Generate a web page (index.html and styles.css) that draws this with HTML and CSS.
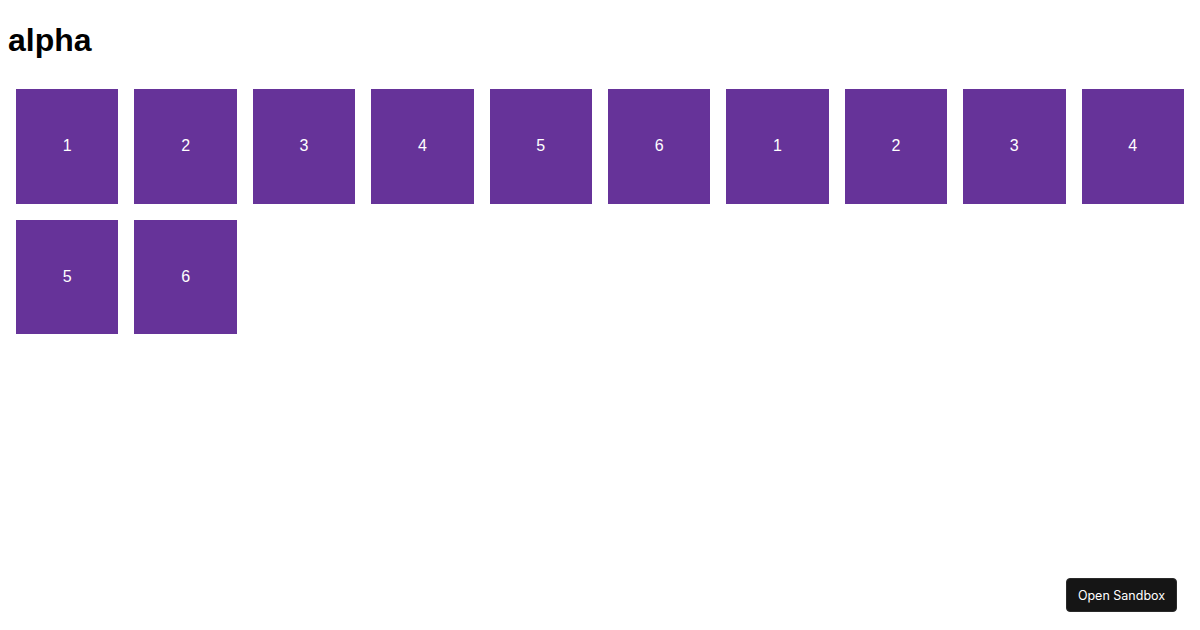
FILE: index.html
```html
<!DOCTYPE html>
<html>
<head>
<meta charset="utf-8">
<link rel="stylesheet" href="styles.css">
</head>
<body>
<h1 class="title">alpha</h1>
<div class="grid">
  <div class="box">1</div>
  <div class="box">2</div>
  <div class="box">3</div>
  <div class="box">4</div>
  <div class="box">5</div>
  <div class="box">6</div>
  <div class="box">1</div>
  <div class="box">2</div>
  <div class="box">3</div>
  <div class="box">4</div>
  <div class="box">5</div>
  <div class="box">6</div>
</div>
<button class="sandbox">Open Sandbox</button>
</body>
</html>
```
FILE: styles.css
```css
body {
  margin: 8px;
  font-family: "Liberation Sans", Arial, sans-serif;
  background: #fff;
}
.title {
  font-size: 32px;
  font-weight: bold;
  margin: 14.44px 0 21.5px;
  line-height: 37px;
  color: #000;
}
.grid {
  display: flex;
  flex-wrap: wrap;
}
.box {
  box-sizing: border-box;
  flex: 0 0 calc(10% - 16px);
  margin: 8px;
  height: 114.7px;
  background: #663399;
  color: #fff;
  font-size: 16px;
  display: flex;
  align-items: center;
  justify-content: center;
}
.sandbox {
  position: fixed;
  right: 23px;
  bottom: 18px;
  width: 111px;
  height: 34px;
  background: #151515;
  color: #fff;
  border: 1px solid #2a2a2a;
  border-radius: 4px;
  font-family: Inter, "Liberation Sans", sans-serif;
  font-size: 12.5px;
  padding: 0;
}
```
